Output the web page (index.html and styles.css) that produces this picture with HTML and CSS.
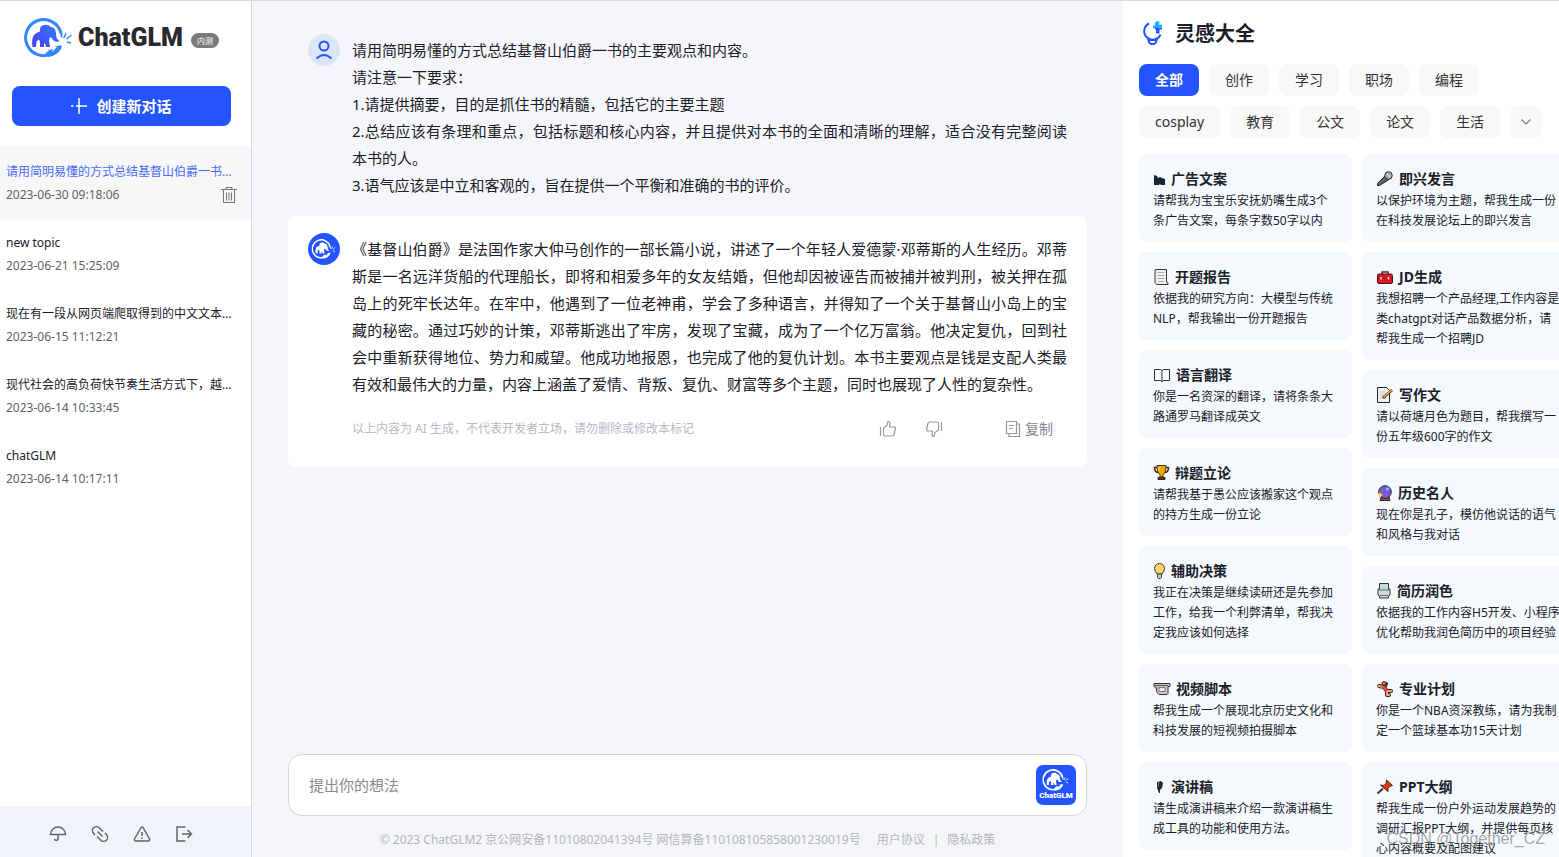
FILE: index.html
```
<!DOCTYPE html>
<html lang="zh-CN">
<head>
    <meta charset="UTF-8">
    <meta name="viewport" content="width=device-width, initial-scale=1.0">
    <title>ChatGLM</title>
    <link rel="stylesheet" href="styles.css">
</head>
<body>
    <!-- 公用图形 -->
    <svg class="defs" width="0" height="0" aria-hidden="true">
        <symbol id="elephant" viewBox="0 0 50 40">
            <path class="ring" d="M37 15A18 18 0 1 0 29 35" fill="none" stroke-width="3"/>
            <path class="ring-fill" d="M35.500 13l3 2 0 5-1.500-1zM25 32l4-1-1 3 5-5-3 0c4-1 5-2 8-1-1 6-8 11-15 11l2-3-4 0z"/>
            <path class="body" d="M8.500 29c-1-8 0-14 7-15l1-5c3-3 8-3 10 0 4 0 5 3 5.500 6 0 4 1 7 4 8-4 2-7 0-8-3l-2-1-1 3 1 7h-4l-1-4-1 1v3h-4v-6l-1.500-1.500-2 2L12 29z"/>
            <path class="spray" d="M40 20l2-5M42.500 21l5-4M43 24l4 1" fill="none" stroke-width="1.500"/>
        </symbol>
    </svg>

    <div class="app">
        <!-- 左侧：历史对话 -->
        <aside class="sidebar">
            <div class="brand">
                <svg class="brand-logo" viewBox="0 0 50 40" aria-hidden="true">
                    <defs>
                        <linearGradient id="bodyBlue" x1="0" y1="1" x2="1" y2="0">
                            <stop offset="0" stop-color="#4a3df5"/>
                            <stop offset="1" stop-color="#2f7dfc"/>
                        </linearGradient>
                    </defs>
                    <use href="#elephant"/>
                </svg>
                <span class="brand-name">ChatGLM</span>
                <span class="brand-tag">内测</span>
            </div>
            <button class="new-chat" type="button">
                <svg width="16" height="16" viewBox="0 0 16 16" fill="none" stroke="#fff" stroke-width="1.500"><path d="M8 0v16M5 8h11M0 8h2.500"/></svg>
                <span>创建新对话</span>
            </button>
            <nav class="history">
                <div class="topic active">
                    <a class="topic-title" href="#">请用简明易懂的方式总结基督山伯爵一书的主要观点和内容</a>
                    <div class="topic-row">
                        <time>2023-06-30 09:18:06</time>
                        <button class="icon-btn" type="button" aria-label="删除">
                            <svg width="16" height="18" viewBox="0 0 16 18" fill="none" stroke="#777"><path d="M0 3.500h16M5 3V1.500h6V3M2.500 4v12.500h11V4M5.500 6.500v8M8 6.500v8M10.500 6.500v8"/></svg>
                        </button>
                    </div>
                </div>
                <div class="topic">
                    <a class="topic-title" href="#">new topic</a>
                    <div class="topic-row"><time>2023-06-21 15:25:09</time></div>
                </div>
                <div class="topic">
                    <a class="topic-title" href="#">现在有一段从网页端爬取得到的中文文本，请帮我整理</a>
                    <div class="topic-row"><time>2023-06-15 11:12:21</time></div>
                </div>
                <div class="topic">
                    <a class="topic-title" href="#">现代社会的高负荷快节奏生活方式下，越来越多的人</a>
                    <div class="topic-row"><time>2023-06-14 10:33:45</time></div>
                </div>
                <div class="topic">
                    <a class="topic-title" href="#">chatGLM</a>
                    <div class="topic-row"><time>2023-06-14 10:17:11</time></div>
                </div>
            </nav>
            <div class="tools">
                <button class="icon-btn" type="button" aria-label="反馈">
                    <svg width="18" height="18" viewBox="0 0 18 18"><path d="M1.500 9.500a7.500 7.500 0 0 1 15 0zM9 9.500V14a1.800 1.800 0 0 1-3.500 0"/></svg>
                </button>
                <button class="icon-btn" type="button" aria-label="链接">
                    <svg width="18" height="18" viewBox="0 0 18 18"><path d="M6.500 6.500l5 5M4 10L2.600 8.400a3.800 3.800 0 0 1 5.600-5.600L12 6.500M14 8l1.400 1.600a3.800 3.800 0 0 1-5.600 5.600L6 11.500"/></svg>
                </button>
                <button class="icon-btn" type="button" aria-label="举报">
                    <svg width="18" height="18" viewBox="0 0 18 18"><path d="M8 2.500L1.500 14q-.5 1.800 1.200 2h12.600q1.700-.2 1.200-2L10 2.500q-1-1-2 0zM9 7v4M9 12.500V14"/></svg>
                </button>
                <button class="icon-btn" type="button" aria-label="退出登录">
                    <svg width="18" height="18" viewBox="0 0 18 18"><path d="M10.500 2H2v14h8.500M7 9h9.500M12.500 5l4 4-4 4"/></svg>
                </button>
            </div>
        </aside>

        <!-- 中间：对话内容 -->
        <main class="chat">
            <div class="messages">
                <section class="message">
                    <span class="avatar user">
                        <svg width="20" height="20" viewBox="0 0 20 20" fill="none" stroke="#2454ff" stroke-width="2"><circle cx="10" cy="6" r="4.500"/><path d="M2.500 18.500q7.500-7 15 0"/></svg>
                    </span>
                    <div class="message-text">
                        <p>请用简明易懂的方式总结基督山伯爵一书的主要观点和内容。</p>
                        <p>请注意一下要求：</p>
                        <p>1.请提供摘要，目的是抓住书的精髓，包括它的主要主题</p>
                        <p>2.总结应该有条理和重点，包括标题和核心内容，并且提供对本书的全面和清晰的理解，适合没有完整阅读本书的人。</p>
                        <p>3.语气应该是中立和客观的，旨在提供一个平衡和准确的书的评价。</p>
                    </div>
                </section>
                <section class="message answer">
                    <span class="avatar bot"><svg width="26" height="20" viewBox="0 0 50 40"><use href="#elephant"/></svg></span>
                    <div class="message-text">
                        <p>《基督山伯爵》是法国作家大仲马创作的一部长篇小说，讲述了一个年轻人爱德蒙·邓蒂斯的人生经历。邓蒂斯是一名远洋货船的代理船长，即将和相爱多年的女友结婚，但他却因被诬告而被捕并被判刑，被关押在孤岛上的死牢长达年。在牢中，他遇到了一位老神甫，学会了多种语言，并得知了一个关于基督山小岛上的宝藏的秘密。通过巧妙的计策，邓蒂斯逃出了牢房，发现了宝藏，成为了一个亿万富翁。他决定复仇，回到社会中重新获得地位、势力和威望。他成功地报恩，也完成了他的复仇计划。本书主要观点是钱是支配人类最有效和最伟大的力量，内容上涵盖了爱情、背叛、复仇、财富等多个主题，同时也展现了人性的复杂性。</p>
                        <div class="message-foot">
                            <span class="notice">以上内容为 AI 生成，不代表开发者立场，请勿删除或修改本标记</span>
                            <button class="icon-btn" type="button" aria-label="赞">
                                <svg width="18" height="18" viewBox="0 0 18 18"><path d="M1.500 7v9M4.500 8L8 5.500l1-4q2.500 0 2 2.500l-.5 3h5.500l.5 1-1.500 7-1.500 1H6l-1.500-1z"/></svg>
                            </button>
                            <button class="icon-btn" type="button" aria-label="踩">
                                <svg width="18" height="18" viewBox="0 0 18 18"><path d="M16.500 2v9M13.500 10L10 12.500l-1 4q-2.500 0-2-2.500l.5-3H2l-.5-1L3 3l1.500-1H12l1.500 1z"/></svg>
                            </button>
                            <button class="icon-btn copy" type="button">
                                <svg width="16" height="18" viewBox="0 0 16 18"><path d="M1.500 1.500h10v12h-10zM12 4h2.500v12.500H4V14M4 5.500h5M4 8.500h3.500"/></svg>
                                复制
                            </button>
                        </div>
                    </div>
                </section>
            </div>
            <form class="composer">
                <input class="composer-input" type="text" placeholder="提出你的想法" aria-label="提出你的想法">
                <button class="send" type="button">
                    <svg width="28" height="22" viewBox="0 0 50 40" aria-hidden="true"><use href="#elephant"/></svg>
                    <span>ChatGLM</span>
                </button>
            </form>
            <footer class="copyright">
                <span>© 2023 ChatGLM2 京公网安备11010802041394号 网信算备110108105858001230019号</span>
                <span class="policies"><a href="#">用户协议</a><span>|</span><a href="#">隐私政策</a></span>
            </footer>
        </main>

        <!-- 右侧：灵感大全 -->
        <aside class="ideas">
            <h2 class="ideas-title">
                <svg width="24" height="28" viewBox="0 0 24 28" fill="none" stroke="#2454ff" stroke-width="2">
                    <path d="M8 4.500a8.500 8.500 0 1 0 11.500 11"/>
                    <path d="M7 19.500l1 4 2 1.500h3l2-1.500 1-4M8 21h7"/>
                    <path d="M15 3.500v4.500l-3 0M15 3.500h2v3.500h4" stroke="#05b9fb" stroke-width="2.500"/>
                    <path d="M14 9.500h2v4h1.500v-4H21"/>
                </svg>
                灵感大全
            </h2>
            <div class="chips">
                <button class="chip selected" type="button">全部</button>
                <button class="chip" type="button">创作</button>
                <button class="chip" type="button">学习</button>
                <button class="chip" type="button">职场</button>
                <button class="chip" type="button">编程</button>
                <button class="chip" type="button">cosplay</button>
                <button class="chip" type="button">教育</button>
                <button class="chip" type="button">公文</button>
                <button class="chip" type="button">论文</button>
                <button class="chip" type="button">生活</button>
                <button class="chip more" type="button" aria-label="展开">
                    <svg width="10" height="6" viewBox="0 0 10 6" fill="none" stroke="#777" stroke-width="1.200"><path d="M.5.5L5 5 9.500.5"/></svg>
                </button>
            </div>
            <div class="cards">
                <div class="column">
                    <article class="card">
                        <h3><svg width="13" height="16" viewBox="0 0 13 16"><path fill="#1d2532" d="M1 4l3 1 1 2 2-1 2 1 3 1v6l-4 0-1-1-1 1-5 0z"/></svg>广告文案</h3>
                        <p>请帮我为宝宝乐安抚奶嘴生成3个条广告文案，每条字数50字以内</p>
                    </article>
                    <article class="card">
                        <h3><svg width="17" height="16" viewBox="0 0 17 16"><path fill="#f1f1f1" stroke="#333" d="M2.500.5h11V13l1.500 1v1.500H3.500l-1.500-2V1z"/><path stroke="#aaa" d="M4.500 3.500h7M4.500 6.500h7M4.500 9.500h7M5 12.500h6"/></svg>开题报告</h3>
                        <p>依据我的研究方向：大模型与传统NLP，帮我输出一份开题报告</p>
                    </article>
                    <article class="card">
                        <h3><svg width="18" height="16" viewBox="0 0 18 16"><path fill="#fff" stroke="#26323f" d="M1.500 2.500h6l1.500 1 1.500-1h6v11h-6L9 14.500l-1.500-1h-6zM9 3.500v11"/></svg>语言翻译</h3>
                        <p>你是一名资深的翻译，请将条条大路通罗马翻译成英文</p>
                    </article>
                    <article class="card">
                        <h3><svg width="17" height="16" viewBox="0 0 17 16"><path fill="none" stroke="#3b2c10" stroke-width="1.500" d="M4 2.500H1.500q0 5 4 5M13 2.500h2.500q0 5-4 5"/><path fill="#f5a900" stroke="#4b3208" d="M4 .5h9q0 8-3 9v2.500H7V9.500Q4 8 4 .5z"/><path fill="#7b3b1c" stroke="#332014" d="M5 12.500h7v2H5z"/><path stroke="#ffe070" d="M6 2v4"/></svg>辩题立论</h3>
                        <p>请帮我基于愚公应该搬家这个观点的持方生成一份立论</p>
                    </article>
                    <article class="card">
                        <h3><svg width="13" height="16" viewBox="0 0 13 16"><path fill="#ffd26a" stroke="#4b3c24" d="M4 11Q1.500 8 1.500 5.500a5 5 0 0 1 10 0Q11.500 8 9 11z"/><path fill="#c5c9cc" stroke="#444" d="M4.500 11h4v3.500l-1 1h-2l-1-1z"/></svg>辅助决策</h3>
                        <p>我正在决策是继续读研还是先参加工作，给我一个利弊清单，帮我决定我应该如何选择</p>
                    </article>
                    <article class="card">
                        <h3><svg width="18" height="16" viewBox="0 0 18 16"><path fill="#c9c9c9" stroke="#333" d="M1 2.500h16v3h-2v7l-1 1H6l-2-2-1-5-2-1z"/><path fill="#eee" stroke="#777" d="M6 6.500h6v4H6z"/><path stroke="#555" d="M2 4.500h13"/><path stroke="#e96a5c" stroke-width="1.500" d="M4 7h1.500"/></svg>视频脚本</h3>
                        <p>帮我生成一个展现北京历史文化和科技发展的短视频拍摄脚本</p>
                    </article>
                    <article class="card">
                        <h3><svg width="13" height="16" viewBox="0 0 13 16"><path fill="#222831" d="M4 3l4-1 2 2-1 5-2 2 0 3H6l-1-3-1-2z"/><path stroke="#7e8795" d="M6 3l-1 5"/></svg>演讲稿</h3>
                        <p>请生成演讲稿来介绍一款演讲稿生成工具的功能和使用方法。</p>
                    </article>
                </div>
                <div class="column">
                    <article class="card">
                        <h3><svg width="18" height="16" viewBox="0 0 18 16"><path fill="#62666b" stroke="#222" d="M9.500 4.500L1.500 12.500v2h2l9.500-6z"/><circle cx="12.500" cy="4.500" r="3.800" fill="#a9adb2" stroke="#333"/><path stroke="#eee" d="M11 3l3 3"/></svg>即兴发言</h3>
                        <p>以保护环境为主题，帮我生成一份在科技发展论坛上的即兴发言</p>
                    </article>
                    <article class="card">
                        <h3><svg width="18" height="16" viewBox="0 0 18 16"><path fill="none" stroke="#333" stroke-width="1.500" d="M6 5V3h6v2"/><rect x="1.500" y="5" width="15" height="9.500" rx="1.500" fill="#dd1823" stroke="#541014"/><path stroke="#8c1118" d="M2 9h14"/><path stroke="#eee" stroke-width="1.500" d="M5 8v2.500M12.500 8v2.500"/></svg>JD生成</h3>
                        <p>我想招聘一个产品经理,工作内容是类chatgpt对话产品数据分析，请帮我生成一个招聘JD</p>
                    </article>
                    <article class="card">
                        <h3><svg width="18" height="16" viewBox="0 0 18 16"><path fill="#f3f3f3" stroke="#222" d="M1.500.5h9l3 3v12h-12z"/><path stroke="#bbb" d="M3.500 5h6M3.500 8h5M3.500 11h7"/><path stroke="#5a3e1d" stroke-width="3" d="M7 11l9-8"/><path stroke="#f5b63a" stroke-width="1.500" d="M8 10l7-6.500"/><path stroke="#ef6f72" stroke-width="2" d="M15 4l1-1"/></svg>写作文</h3>
                        <p>请以荷塘月色为题目，帮我撰写一份五年级600字的作文</p>
                    </article>
                    <article class="card">
                        <h3><svg width="17" height="16" viewBox="0 0 17 16"><path fill="#8c5132" stroke="#332522" d="M5 12h8l1 3.500H4z"/><circle cx="9" cy="7" r="6.300" fill="#7c5bd2" stroke="#30274b"/><path fill="#ffe13f" d="M4 7l1 2 2 1-2 1-1 2-1-2-2-1 2-1z"/><path stroke="#65d3ff" stroke-width="1.500" d="M10 4h3M11.500 2.500v3"/></svg>历史名人</h3>
                        <p>现在你是孔子，模仿他说话的语气和风格与我对话</p>
                    </article>
                    <article class="card">
                        <h3><svg width="16" height="16" viewBox="0 0 16 16"><path fill="#d3d8dc" stroke="#333" d="M3.500.5h9V6h1.500v6l-1.500 1v2h-9v-2L2 12V6h1.500z"/><path fill="#a5e1f5" d="M5 2h4v4H5z"/><path stroke="#666" d="M3 7h10M4 12.500h8"/></svg>简历润色</h3>
                        <p>依据我的工作内容H5开发、小程序优化帮助我润色简历中的项目经验</p>
                    </article>
                    <article class="card">
                        <h3><svg width="18" height="16" viewBox="0 0 18 16"><g fill="none" stroke-linecap="round" stroke-linejoin="round"><path stroke="#3b211b" stroke-width="4" d="M3 5l5 1 3 4 4 0M8 6l2-3M11 10v4h2"/><path stroke="#ebb477" stroke-width="2" d="M2.500 5L8 6l3 4h4M11 10v4h2"/><path stroke="#e4424d" stroke-width="3" d="M7.500 6l3 3"/></g><circle cx="8" cy="2.500" r="2" fill="#d7892f" stroke="#4b2919"/></svg>专业计划</h3>
                        <p>你是一个NBA资深教练，请为我制定一个篮球基本功15天计划</p>
                    </article>
                    <article class="card">
                        <h3><svg width="18" height="16" viewBox="0 0 18 16"><path stroke="#333" stroke-width="2" d="M7 9.500l-5.500 5"/><path fill="#e8370f" stroke="#4f1a10" d="M10.500 1l6 5.500-3 1-1.500 2 0 3L4.500 6l3.500.5 2-2z"/></svg>PPT大纲</h3>
                        <p>帮我生成一份户外运动发展趋势的调研汇报PPT大纲，并提供每页核心内容概要及配图建议</p>
                    </article>
                </div>
            </div>
        </aside>
    </div>
    <div class="watermark">CSDN @Together_CZ</div>
</body>
</html>
```
FILE: styles.css
```
* {
    box-sizing: border-box;
}
body {
    margin: 0;
    color: #1a2029;
    font-family: "Noto Sans", "Noto Sans CJK SC", sans-serif;
    font-size: 14px;
}
p, h2, h3 {
    margin: 0;
}
a {
    color: inherit;
    text-decoration: none;
}
button {
    padding: 0;
    border: 0;
    color: inherit;
    font: inherit;
    cursor: pointer;
}
.defs {
    position: absolute;
}
.app {
    display: flex;
    height: 100vh;
    overflow: hidden;
    border-top: 1px solid #d9dadd;
}

/* 大象标志的颜色 */
.ring, .spray {
    stroke: var(--ring, #fff);
}
.ring-fill {
    fill: var(--ring, #fff);
}
.body {
    fill: var(--body, #fff);
}

/* 左侧栏 */
.sidebar {
    display: flex;
    flex-direction: column;
    flex: 0 0 252px;
    min-width: 0;
    border-right: 1px solid #d3d5da;
    background: #fff;
}
.brand {
    display: flex;
    align-items: center;
    height: 85px;
    padding: 0 24px 12px;
}
.brand-logo {
    flex: 0 0 50px;
    height: 40px;
    --ring: #3485ff;
    --body: url(#bodyBlue);
}
.brand-name {
    margin-left: 4px;
    color: #28282f;
    font-family: Roboto, sans-serif;
    font-size: 25px;
    font-weight: 900;
}
.brand-tag {
    margin: 6px 0 0 8px;
    padding: 0 6px;
    border-radius: 8px;
    background: #7b7b7b;
    color: #fff;
    font-size: 8px;
    line-height: 15px;
    white-space: nowrap;
}
.new-chat {
    display: flex;
    align-items: center;
    justify-content: center;
    gap: 9px;
    height: 40px;
    margin: 0 20px 20px 12px;
    border-radius: 8px;
    background: #2454ff;
    color: #fff;
    font-size: 15px;
    font-weight: bold;
}
.new-chat span {
    padding-bottom: 2px;
}
.history {
    flex: 1;
    overflow: hidden;
}
.topic {
    height: 71px;
    padding: 14px 14px 0 6px;
    font-size: 12px;
}
.topic.active {
    background: #f7f7f8;
    box-shadow: 0 2px 4px rgba(0, 0, 0, 0.06);
}
.topic-title {
    display: block;
    overflow: hidden;
    line-height: 23px;
    text-overflow: ellipsis;
    white-space: nowrap;
}
.active .topic-title {
    color: #4a6cf7;
}
.topic-row {
    display: flex;
    align-items: center;
    justify-content: space-between;
    height: 23px;
    color: #606266;
}
.icon-btn {
    display: flex;
    align-items: center;
    background: none;
}
.tools {
    display: flex;
    align-items: center;
    gap: 24px;
    height: 51px;
    padding: 4px 49px 0;
    background: #f0f3f9;
}
.tools svg {
    fill: none;
    stroke: #666;
    stroke-width: 1.5;
}

/* 对话区 */
.chat {
    display: flex;
    flex: 1;
    flex-direction: column;
    min-width: 0;
    padding: 16px 36px 0;
    background: #f5f6f9;
}
.messages {
    flex: 1;
}
.message {
    display: flex;
    align-items: flex-start;
    gap: 12px;
    padding: 17px 20px;
}
.message.answer {
    border-radius: 8px;
    background: #fff;
}
.avatar {
    display: flex;
    flex: 0 0 32px;
    align-items: center;
    justify-content: center;
    height: 32px;
    border-radius: 50%;
}
.avatar.user {
    background: #dde6f8;
}
.avatar.bot {
    background: #2454ff;
}
.message-text {
    flex: 1;
    padding-top: 3px;
    font-size: 15px;
    line-height: 27px;
    text-align: justify;
}
.message-foot {
    display: flex;
    align-items: center;
    height: 33px;
    margin: 14px 14px 5px 0;
    color: #7f8590;
}
.message-foot svg {
    fill: none;
    stroke: #9298a3;
    stroke-width: 1.2;
}
.message-foot .icon-btn {
    margin-left: 28px;
}
.message-foot .notice {
    margin-right: auto;
    color: #b6bac2;
    font-size: 12px;
}
.message-foot .copy {
    gap: 4px;
    margin-left: 62px;
    font-size: 14px;
}
.composer {
    display: flex;
    align-items: center;
    height: 62px;
    padding: 0 10px 0 20px;
    border: 1px solid #d3d6de;
    border-radius: 14px;
    background: #fff;
}
.composer-input {
    flex: 1;
    padding: 0;
    border: 0;
    outline: 0;
    background: none;
    font: inherit;
    font-size: 15px;
}
.composer-input::placeholder {
    color: #858a93;
}
.send {
    display: flex;
    flex-direction: column;
    align-items: center;
    justify-content: center;
    width: 40px;
    height: 40px;
    border-radius: 7px;
    background: #2454ff;
    color: #fff;
    font-family: Roboto, sans-serif;
    font-size: 8px;
    font-weight: 900;
    line-height: 10px;
}
.copyright {
    display: flex;
    justify-content: center;
    gap: 16px;
    height: 41px;
    padding-top: 14px;
    color: #b1b5bd;
    font-size: 12px;
    line-height: 20px;
    white-space: nowrap;
}
.policies {
    display: flex;
    gap: 8px;
}

/* 灵感大全 */
.ideas {
    flex: 0 0 436px;
    overflow: hidden;
    padding: 14px 0 0 16px;
    background: #fff;
}
.ideas-title {
    display: flex;
    align-items: center;
    gap: 10px;
    height: 35px;
    margin-bottom: 14px;
    padding-left: 2px;
    font-size: 20px;
}
.chips {
    display: flex;
    flex-wrap: wrap;
    gap: 10px;
    margin-bottom: 16px;
}
.chip {
    height: 32px;
    padding: 0 16px 2px;
    border-radius: 8px;
    background: #f8f8f8;
    color: #333;
    font-size: 14px;
}
.chip.selected {
    background: #2454ff;
    color: #fff;
    font-weight: bold;
}
.chip.more {
    display: flex;
    align-items: center;
    padding: 0 11px;
}
.cards {
    display: grid;
    grid-template-columns: 213px 213px;
    gap: 10px;
}
.column {
    display: flex;
    flex-direction: column;
    gap: 10px;
}
.card {
    padding: 12px 14px 11px;
    border-radius: 8px;
    background: #f4f9fd;
    font-size: 12px;
    line-height: 20px;
}
.card h3 {
    display: flex;
    align-items: center;
    gap: 5px;
    font-size: 14px;
    line-height: 25px;
}
.card svg {
    fill: none;
}
.watermark {
    position: absolute;
    right: 14px;
    bottom: 6px;
    color: rgba(110, 110, 110, 0.6);
    font-family: "Liberation Sans", sans-serif;
    font-size: 16px;
    line-height: 24px;
    pointer-events: none;
}
```
